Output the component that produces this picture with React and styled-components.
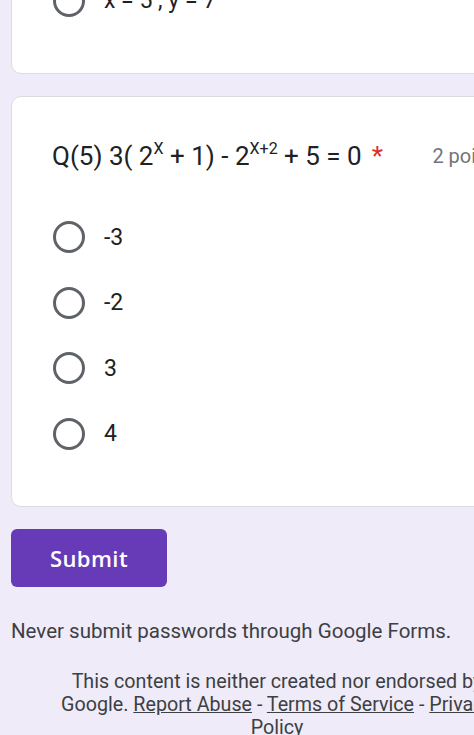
import React from 'react'
import styled, { createGlobalStyle } from 'styled-components'

const GlobalStyle = createGlobalStyle`
  html, body {
    margin: 0;
    padding: 0;
    background: #f0ebf8;
    overflow: hidden;
  }
  body {
    font-family: Roboto, "Noto Sans", Arial, sans-serif;
  }
`

const options = ['-3', '-2', '3', '4']

export default function App() {
  return (
    <>
      <GlobalStyle />
      <Page>
        <Card>
          <Options>
            <Option label="x = 5 , y = 7" />
          </Options>
        </Card>
        <Card $question>
          <QuestionRow>
            <QuestionText>
              Q(5) 3( 2<Sup>X</Sup> + 1) - 2<Sup>X+2</Sup> + 5 = 0
              <Required>*</Required>
            </QuestionText>
            <Points>2 points</Points>
          </QuestionRow>
          <Options>
            {options.map(o => (
              <Option key={o} label={o} />
            ))}
          </Options>
        </Card>
        <SubmitButton>Submit</SubmitButton>
        <Warning>Never submit passwords through Google Forms.</Warning>
        <Footer>
          This content is neither created nor endorsed by Google.{' '}
          <FooterLink>Report Abuse</FooterLink> -{' '}
          <FooterLink>Terms of Service</FooterLink> -{' '}
          <FooterLink>Privacy Policy</FooterLink>
        </Footer>
      </Page>
    </>
  )
}

function Option({ label }) {
  return (
    <OptionRow>
      <Radio />
      <OptionLabel>{label}</OptionLabel>
    </OptionRow>
  )
}

const Page = styled.main`
  display: flex;
  flex-direction: column;
  align-items: flex-start;
  width: 532px;
  margin-top: -33px;
  padding-left: 11px;
`
const Card = styled.section`
  box-sizing: border-box;
  width: 100%;
  background: #ffffff;
  border: 1px solid #dadce0;
  border-radius: 10px;
  padding: ${p => (p.$question ? '43px 38px 39px 40px' : '0 38px 39px 40px')};
  margin-bottom: 22px;
`
const QuestionRow = styled.div`
  display: flex;
  align-items: center;
  justify-content: space-between;
  height: 32px;
  margin-bottom: 33px;
`
const QuestionText = styled.div`
  font-size: 26px;
  color: #202124;
  white-space: nowrap;
`
const Sup = styled.sup`
  font-size: 16px;
  vertical-align: 11px;
  line-height: 0;
`
const Required = styled.span`
  color: #d93025;
  margin-left: 10px;
`
const Points = styled.span`
  font-size: 20px;
  color: #70757a;
  white-space: nowrap;
`
const Options = styled.div`
  display: flex;
  flex-direction: column;
`
const OptionRow = styled.label`
  display: flex;
  align-items: center;
  height: 65.5px;
`
const Radio = styled.span`
  box-sizing: border-box;
  width: 32px;
  height: 32px;
  border: 3px solid #5f6368;
  border-radius: 50%;
  margin-left: 1px;
  flex-shrink: 0;
`
const OptionLabel = styled.span`
  margin-left: 19px;
  font-size: 23px;
  color: #202124;
`
const SubmitButton = styled.button`
  width: 156px;
  height: 58px;
  border: none;
  border-radius: 6px;
  background: #673ab7;
  color: #ffffff;
  font-family: "Open Sans", Lato, sans-serif;
  font-size: 22px;
  font-weight: 600;
  letter-spacing: 0.4px;
`
const Warning = styled.p`
  margin: 32px 0 0;
  font-size: 20.5px;
  line-height: 24px;
  color: #3c4043;
`
const Footer = styled.p`
  align-self: center;
  box-sizing: border-box;
  width: 450px;
  margin: 27px 0 0;
  text-align: center;
  font-size: 19.7px;
  line-height: 23px;
  color: #3c4043;
`
const FooterLink = styled.a`
  color: #3c4043;
  text-decoration: underline;
`
